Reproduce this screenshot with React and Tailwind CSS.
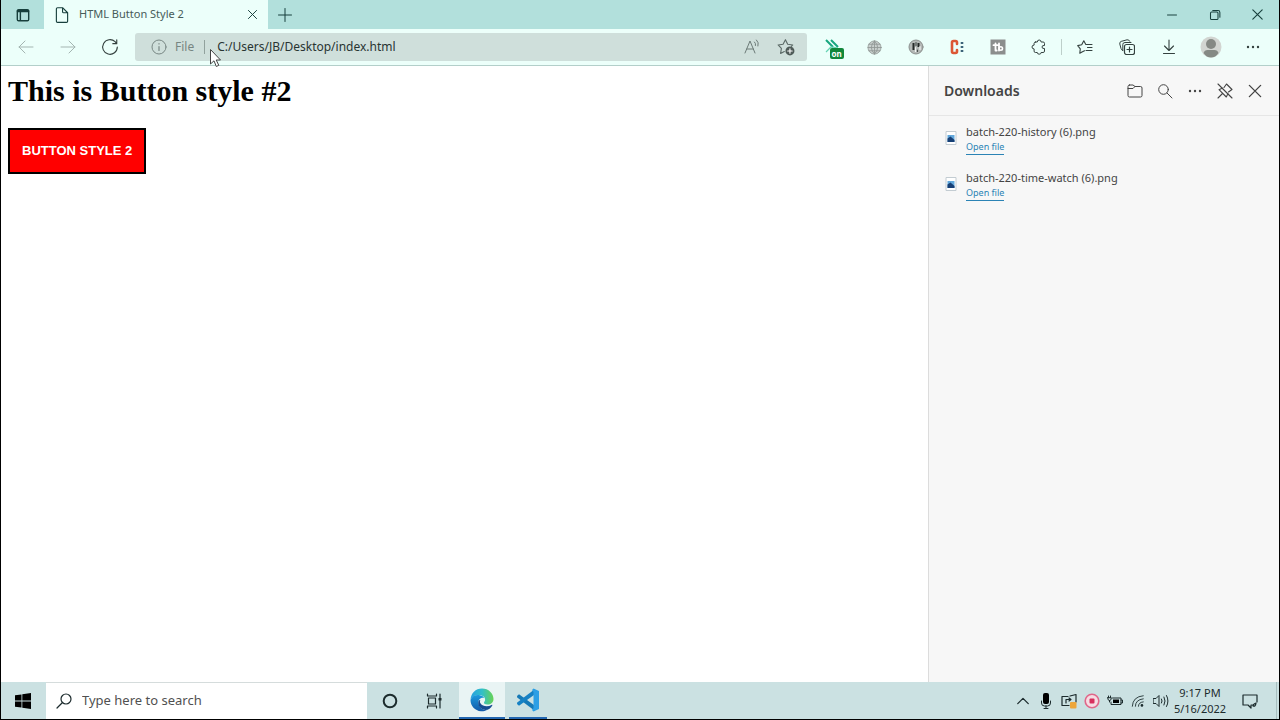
import React, { useState } from 'react';

const downloads = [
    { id: 1, name: 'batch-220-history (6).png' },
    { id: 2, name: 'batch-220-time-watch (6).png' },
];

const Icon = ({ size = 'size-4', children, viewBox = '0 0 16 16' }) => (
    <svg viewBox={viewBox} className={`${size} shrink-0`} fill="none" stroke="currentColor" strokeWidth="1" strokeLinecap="round" strokeLinejoin="round" aria-hidden="true">
        {children}
    </svg>
);

const CloseIcon = ({ size }) => (
    <Icon size={size}><path d="M3 3l10 10M13 3L3 13" strokeWidth="1.200" /></Icon>
);

const DotsIcon = () => (
    <Icon><g fill="currentColor" stroke="none"><circle cx="3" cy="8" r="1.2" /><circle cx="8" cy="8" r="1.2" /><circle cx="13" cy="8" r="1.2" /></g></Icon>
);

// Small document picture used for each downloaded image
const FileThumb = () => (
    <svg viewBox="0 0 12 14" className="mt-[7px] h-[14px] w-3 shrink-0" aria-hidden="true">
        <path d="M1 .5h10v13H1z" fill="#fff" stroke="#c3ccd2" />
        <rect x="2.500" y="4" width="7" height="7" fill="#62a8dc" />
        <path d="M2.500 11V7.500l3-2 4 3.500v2z" fill="#163f75" />
    </svg>
);

const TabStrip = () => (
    <header className="flex h-[29px] bg-[#b2e0dc] text-[#173f3c]">
        <button aria-label="Tab actions" className="flex w-[43px] items-center justify-center">
            <Icon size="size-[14px]">
                <rect x="1.500" y="2" width="13" height="12.500" rx="1.500" strokeWidth="1.600" />
                <path d="M2 3.500h12" strokeWidth="2.500" />
                <path d="M5 5v9" strokeWidth="1.600" />
            </Icon>
        </button>
        <div className="flex w-[224px] items-center bg-[#ecfffa] pr-2 pl-[9px]">
            <Icon size="size-[18px]">
                <path d="M4 1.500h4.500L13 6v7.500q0 1-1 1H4q-1 0-1-1v-11q0-1 1-1zM8.500 1.500V5q0 1 1 1H13" />
            </Icon>
            <span className="ml-2 flex-1 text-[11px] text-[#465c59]">HTML Button Style 2</span>
            <button aria-label="Close tab" className="p-px"><CloseIcon size="size-[13px]" /></button>
        </div>
        <button aria-label="New tab" className="flex w-[34px] items-center justify-center">
            <Icon><path d="M8 1.500v13M1.500 8h13" /></Icon>
        </button>
        <div className="flex-1" />
        <button aria-label="Minimize" className="flex w-[43px] items-center justify-center">
            <Icon size="size-3"><path d="M2 8h12" strokeWidth="1.300" /></Icon>
        </button>
        <button aria-label="Restore" className="flex w-[43px] items-center justify-center">
            <Icon size="size-3">
                <rect x="2" y="4" width="10" height="10" rx="1.500" strokeWidth="1.400" />
                <path d="M5 2h7q2.500 0 2.500 2.500V11" strokeWidth="1.400" />
            </Icon>
        </button>
        <button aria-label="Close window" className="flex w-[43px] items-center justify-center"><CloseIcon size="size-[15px]" /></button>
    </header>
);

const NavButton = ({ label, children, disabled }) => (
    <button aria-label={label} disabled={disabled} className="flex w-[42px] items-center justify-center disabled:text-[#a4b5b1]">{children}</button>
);

const ExtButton = ({ label, children }) => (
    <button aria-label={label} className="flex w-[41px] items-center justify-center">{children}</button>
);

const Toolbar = () => {
    const [url, setUrl] = useState('C:/Users/JB/Desktop/index.html');

    return (
        <nav className="flex h-[37px] border-b border-[#b3cfca] bg-[#ecfffa] pr-[5px] pl-1 text-[#34413f]">
            <NavButton label="Back" disabled><Icon><path d="M15 8H1M7 2L1 8l6 6" /></Icon></NavButton>
            <NavButton label="Forward" disabled><Icon><path d="M1 8h14M9 2l6 6-6 6" /></Icon></NavButton>
            <NavButton label="Refresh">
                <Icon size="size-[18px]"><path d="M14.500 8A6.500 6.500 0 1 1 12.500 3.300L14 5M14 1.500V5h-3.500" /></Icon>
            </NavButton>

            <div className="relative my-1 mr-[6px] ml-1 flex min-w-0 flex-1 items-center rounded-[3px] bg-[#cfdfdb] pr-3 pl-4">
                <Icon size="size-4">
                    <circle cx="8" cy="8" r="7" stroke="#788784" />
                    <path d="M8 7.500v4M8 4.500v.5" stroke="#788784" strokeWidth="1.200" />
                </Icon>
                <label htmlFor="address" className="ml-2 text-xs text-[#778582]">File</label>
                <span className="ml-[10px] h-[14px] w-px bg-[#91a19d]" />
                <input id="address" value={url} onChange={(e) => setUrl(e.target.value)} className="ml-3 min-w-0 flex-1 bg-transparent text-xs text-[#283432] outline-none" />
                <button aria-label="Read aloud" className="text-[#6c7a77]">
                    <Icon size="size-4">
                        <path d="M1 14L6 2l5 12M2.800 10h6.500M10.500 3q1.500 1.300 1 3.500M12.500 1q2.700 2.500 1.500 6" />
                    </Icon>
                </button>
                <button aria-label="Add to favorites" className="ml-[17px] text-[#5c6a67]">
                    <Icon size="size-[18px]">
                        <path d="M6.500 12l-3.300 1.800.7-4.500L1 6.200l4.400-.7L7.500 1.500l2 4 4.500.7-1.200 1.300" />
                        <circle cx="11.500" cy="11.500" r="4" fill="#4f5b58" stroke="none" />
                        <path d="M11.500 9.500v4M9.500 11.500h4" stroke="#fff" />
                    </Icon>
                </button>
                <svg viewBox="0 0 11 18" className="pointer-events-none absolute top-4 left-[75px] h-[18px] w-[11px]" aria-hidden="true">
                    <path d="M.5.5v14.500l3.500-3.200L6.300 17.500l2.500-1.200L6.200 11h4.300z" fill="#fff" stroke="#444" />
                </svg>
            </div>

            <ExtButton label="Code sharing extension">
                <span className="relative flex size-[18px]">
                    <svg viewBox="0 0 18 18" className="size-[18px]" fill="none" stroke="#18a77f" strokeWidth="2" aria-hidden="true">
                        <path d="M1 2l7 7M6 2l7 7" />
                        <path d="M1 14l5-5 7 1" stroke="#65d3b4" strokeWidth="1.200" />
                    </svg>
                    <span className="absolute top-[10px] left-[5px] rounded-[2px] bg-[#11873a] px-[2px] text-[8px] leading-[11px] font-bold text-white">on</span>
                </span>
            </ExtButton>
            <ExtButton label="Web extension">
                <Icon size="size-[15px]">
                    <circle cx="8" cy="8" r="7" fill="#c9d0ce" stroke="#9ea6a3" />
                    <path d="M1 8h14M8 1v14M2 4.500h12M2 11.500h12M8 1q-7 7 0 14M8 1q7 7 0 14" stroke="#8f9794" strokeWidth=".9" />
                </Icon>
            </ExtButton>
            <ExtButton label="Page inspector">
                <Icon>
                    <circle cx="8" cy="8" r="7" fill="#b4b8b6" stroke="#8b908e" />
                    <path d="M5.500 4v7M10.500 4v4" stroke="#242827" strokeWidth="2" strokeLinecap="butt" />
                    <path d="M7.500 8.500v4M12 7.500v3" stroke="#f3f5f4" strokeWidth="1.200" />
                    <path d="M8 3.500v3M9.500 11v1.500" stroke="#4a504e" strokeWidth="1.200" />
                </Icon>
            </ExtButton>
            <ExtButton label="Color picker">
                <Icon>
                    <path d="M8 5V3.500Q8 2 6.500 2H4.500Q3 2 3 3.500v9Q3 14 4.500 14h2Q8 14 8 12.500V11" stroke="#dc5735" strokeWidth="2.600" />
                    <path d="M13 3v2M13 7v2M13 11v2" stroke="#3c6379" strokeWidth="2.600" strokeLinecap="butt" />
                </Icon>
            </ExtButton>
            <ExtButton label="Video toolkit">
                <Icon>
                    <rect x=".5" y=".5" width="15" height="15" fill="#8b8e8d" stroke="none" />
                    <path d="M3.500 6.200h4M5.500 4.500v7h1.200M9 4.500v7" stroke="#fff" strokeWidth="1.800" />
                    <circle cx="10.800" cy="9.500" r="1.700" stroke="#fff" strokeWidth="1.600" />
                </Icon>
            </ExtButton>
            <ExtButton label="Extensions">
                <Icon>
                    <path d="M4.500 3h1.800Q6.300 1 8.200 1t1.900 2h2q1.400 0 1.400 1.400v2.100q-2.500-.4-2.500 1.500t2.500 1.500v2.600q0 1.400-1.400 1.400h-2q0 1.700-1.900 1.700t-1.900-1.700H4.500q-1.400 0-1.400-1.400V9.900Q1 9.900 1 8t2.100-1.900V4.400Q3.100 3 4.500 3z" />
                </Icon>
            </ExtButton>
            <span className="mx-[2px] h-4 w-px self-center bg-[#bdcfca]" />
            <NavButton label="Favorites">
                <Icon>
                    <path d="M7.500 11.800L5 13l-2.200 1.200.5-4.400L.7 6.600l4-.8L6.800 1.800l2 3.700h6.200M10.500 8.500H15M9 11.500h6" strokeWidth="1.100" />
                </Icon>
            </NavButton>
            <NavButton label="Collections">
                <Icon>
                    <rect x="5.500" y="5.500" width="10" height="10" rx="2" strokeWidth="1.200" />
                    <path d="M10.500 8v5M8 10.500h5" strokeWidth="1.200" />
                    <path d="M3.800 11.500Q2.400 11 2 9.500L.8 5Q.4 3 2.200 2.400L8 .8q2-.4 2.700 1.400M3.800 11.500v-6Q3.800 3.500 6 3.500h6" />
                </Icon>
            </NavButton>
            <NavButton label="Downloads"><Icon><path d="M8 1v10M3.500 7L8 11.500 12.500 7M2.500 14.500h11" strokeWidth="1.100" /></Icon></NavButton>
            <NavButton label="Profile">
                <svg viewBox="0 0 22 22" className="size-[22px]" aria-hidden="true">
                    <circle cx="11" cy="11" r="10.500" fill="#d2d5d1" />
                    <circle cx="11" cy="8" r="5" fill="#858984" />
                    <path d="M3.500 17q1-3 4-3h7q3 0 4 3-3 4.500-7.500 4.500T3.500 17z" fill="#858984" />
                </svg>
            </NavButton>
            <NavButton label="Settings and more"><DotsIcon /></NavButton>
        </nav>
    );
};

const PanelButton = ({ label, children }) => (
    <button aria-label={label} className="flex h-6 w-[30px] items-center justify-center">{children}</button>
);

const DownloadsPanel = () => (
    <aside className="w-[351px] shrink-0 border-l border-[#dcdcdc] bg-[#f7f7f7] text-[#444]">
        <div className="flex h-[50px] items-center border-b border-[#e6e6e6] pr-[9px] pl-[15px]">
            <h2 className="flex-1 text-sm font-semibold">Downloads</h2>
            <PanelButton label="Open downloads folder">
                <Icon><path d="M2.500 2H6l2 1.500h5.500q1.500 0 1.500 1.500v7.500q0 1.500-1.500 1.500h-11Q1 14 1 12.500v-9Q1 2 2.500 2zM1 5.500h5L8 3.500" /></Icon>
            </PanelButton>
            <PanelButton label="Search downloads"><Icon><circle cx="6.500" cy="6.500" r="4.800" /><path d="M10 10l5 5" /></Icon></PanelButton>
            <PanelButton label="More options"><DotsIcon /></PanelButton>
            <PanelButton label="Unpin">
                <Icon><path d="M1 1l14 14M1 15l4.500-4.500M5.500 5L2 6.700 9.300 14l1.700-3.500M7 4.500l2.500-3.500L15 6.500 11.500 9" strokeWidth="1.100" /></Icon>
            </PanelButton>
            <PanelButton label="Close downloads"><CloseIcon size="size-[18px]" /></PanelButton>
        </div>
        <ul className="flex flex-col gap-3 px-4 pt-2">
            {downloads.map((file) => (
                <li key={file.id} className="flex h-[34px] gap-[9px]">
                    <FileThumb />
                    <div>
                        <div className="text-[11px] leading-4">{file.name}</div>
                        <a href="#open" className="block w-fit border-b border-[#2b83b5] text-[9px] leading-[14px] text-[#2b83b5]">Open file</a>
                    </div>
                </li>
            ))}
        </ul>
    </aside>
);

const TrayButton = ({ label, children }) => (
    <button aria-label={label} className="flex w-[23px] items-center justify-center">{children}</button>
);

const Taskbar = () => {
    const [query, setQuery] = useState('');

    return (
        <footer className="flex h-[37px] bg-[#cbe1e2] text-[#1c2b2d]">
            <button aria-label="Start" className="flex w-[45px] items-center justify-center pr-px">
                <svg viewBox="0 0 16 16" className="size-4" fill="#000" aria-hidden="true">
                    <path d="M0 2.300l6.500-.9v6.200H0zM7.300 1.300L16 0v7.600H7.300zM0 8.400h6.500v6.200L0 13.700zM7.300 8.400H16V16l-8.700-1.300z" />
                </svg>
            </button>
            <label className="flex w-[321px] items-center border-t border-[#d5dcdc] bg-white pl-[10px]">
                <Icon><circle cx="10" cy="6" r="5" strokeWidth="1.200" /><path d="M6.500 9.500L1 15" strokeWidth="1.200" /></Icon>
                <input aria-label="Search" placeholder="Type here to search" value={query} onChange={(e) => setQuery(e.target.value)} className="ml-[10px] min-w-0 flex-1 text-[13px] outline-none placeholder:text-[#505050]" />
            </label>
            <button aria-label="Cortana" className="flex w-[46px] items-center justify-center">
                <Icon><circle cx="8" cy="8" r="6.300" strokeWidth="2" /></Icon>
            </button>
            <button aria-label="Task view" className="flex w-[46px] items-center justify-center pr-1">
                <Icon><path d="M1.500 1v2h9V1M1.500 15v-2h9v2M2.500 5h7v6h-7zM14 1v14" strokeWidth="1.200" /><path d="M14 5v2.500" strokeWidth="3" strokeLinecap="butt" /></Icon>
            </button>
            <button aria-label="Microsoft Edge" className="flex w-[46px] items-center justify-center border-b-2 border-[#2266b0] bg-[#e9f4f4]">
                <svg viewBox="0 0 24 24" className="size-6" aria-hidden="true">
                    <defs>
                        <linearGradient id="edgeTop" x1="0" y1=".5" x2="1" y2=".5"><stop offset="0" stopColor="#259fe0" /><stop offset=".5" stopColor="#32bfc9" /><stop offset="1" stopColor="#68d353" /></linearGradient>
                        <linearGradient id="edgeLeft" x1="0" y1="0" x2="0" y2="1"><stop offset="0" stopColor="#1b9ade" /><stop offset="1" stopColor="#1459a8" /></linearGradient>
                    </defs>
                    <path d="M.5 12C1 5 5.500.5 12 .5S23.500 5.500 23.500 11c0 3.500-2.600 5.500-6 5.500-3 0-4-1.200-3.400-2.300.6-.9 1-1.500 1-2.700C15 8.500 12 7 8.500 7S1.500 9 .5 12z" fill="url(#edgeTop)" />
                    <path d="M.5 12C1.500 8.500 5 6.500 9 7c2.500.3 4.500 1.500 5.400 3-4-.8-6.600 2-5.900 5.500C9.300 19.500 13 22.500 17 22c-2 1.200-4 1.500-6 1.300C5 22.700.5 18 .5 12z" fill="url(#edgeLeft)" />
                    <path d="M8.500 13c-1.500 5.500 3.500 9 7 9 3 0 5.500-2 6.800-4.500.3-.7-.2-.8-.7-.5-3.600 1.900-9 1.600-11-1.500-.7-1-.9-2.200-.3-3.500-.8.100-1.400.4-1.800 1z" fill="#164c91" />
                </svg>
            </button>
            <button aria-label="Visual Studio Code" className="mx-1 flex w-[38px] items-center justify-center border-b-2 border-[#2266b0]">
                <svg viewBox="0 0 24 24" className="size-6" aria-hidden="true">
                    <path d="M1 8l2-1.700 16 11.500v5.200L1.200 9.500z" fill="#1679b6" />
                    <path d="M1 16l2 1.700L19 6.200V1L1.200 14.500z" fill="#1681c4" />
                    <path d="M17.500.5L23 3v18l-5.500 2.500L16 22l1.500-2V4L16 2z" fill="#2c9fe5" />
                </svg>
            </button>
            <div className="flex-1" />
            <TrayButton label="Show hidden icons"><Icon size="size-[14px]"><path d="M2 11l6-6 6 6" strokeWidth="1.500" /></Icon></TrayButton>
            <TrayButton label="Microphone">
                <Icon><rect x="5" y="0" width="6" height="11" rx="2" fill="#000" stroke="none" /><path d="M3.500 8v2q0 3 3 3h3q3 0 3-3V8M8 13v2.500M6 15.500h4" /></Icon>
            </TrayButton>
            <TrayButton label="Display settings">
                <Icon>
                    <path d="M7 3.500H1v9h7M9 3l6-1.500V9M5 10V6.500h4.500M8 5l2 1.500L8 8" strokeWidth="1.200" />
                    <rect x="9" y="9" width="6.500" height="6.500" rx="1" fill="#eda63a" stroke="none" />
                </Icon>
            </TrayButton>
            <TrayButton label="Screen recorder">
                <Icon><circle cx="8" cy="8" r="6.800" fill="#f6dce3" stroke="#e0678a" strokeWidth="1.600" /><rect x="5.500" y="5.500" width="5" height="5" rx="1" fill="#d72f5d" stroke="none" /></Icon>
            </TrayButton>
            <TrayButton label="Battery">
                <Icon><path d="M5.500 5H14v6.500H4V9M14 7h1.500v3H14M1.500 3v1.500M3.500 3v1.500M.7 4.700h3.600q.2 2.800-1.800 2.800T.7 4.700M2.500 7.500V9" /><rect x="6" y="6.500" width="6" height="3.500" fill="#000" stroke="none" /></Icon>
            </TrayButton>
            <TrayButton label="Network">
                <Icon size="size-[14px]"><path d="M1.500 14Q2 3 14 2M5 14Q5 6.500 14 5.500M8.500 14Q8.500 9.500 14 9" /><circle cx="12.500" cy="13" r="1.500" fill="currentColor" stroke="none" /></Icon>
            </TrayButton>
            <TrayButton label="Volume">
                <Icon><path d="M.5 5.500h2.500l3-3v11l-3-3H.5zM8.500 6q1.200 2 0 4M11 4q2.200 4 0 8M13.500 2.500q3 5.500 0 11" /></Icon>
            </TrayButton>
            <time className="flex w-[56px] flex-col items-center justify-center text-[11px] leading-4" dateTime="2022-05-16T21:17">
                <span>9:17 PM</span>
                <span>5/16/2022</span>
            </time>
            <button aria-label="Notifications" className="flex w-[44px] items-center justify-center">
                <Icon><path d="M1 2h14v7M1 2v10h5l3 3v-3h2M11 13q0-2 3-3-.5 4-3 3z" strokeWidth="1.200" /></Icon>
            </button>
            <button aria-label="Show desktop" className="ml-1 w-[3px] border-l border-[#a9bfc0]" />
        </footer>
    );
};

const App = () => (
    <div className="flex min-h-screen flex-col border-r border-b border-l border-black bg-white font-['Noto_Sans','Open_Sans',sans-serif]">
        <TabStrip />
        <Toolbar />
        <div className="flex flex-1">
            <main className="min-w-0 flex-1 px-[7px] pt-2">
                <h1 className="font-['Liberation_Serif',serif] text-[30px] leading-[34px] font-bold text-black">This is Button style #2</h1>
                <button className="mt-5 h-[46px] border-2 border-black bg-[#ff0000] px-3 font-['Liberation_Sans',sans-serif] text-[13px] font-bold text-white">BUTTON STYLE 2</button>
            </main>
            <DownloadsPanel />
        </div>
        <Taskbar />
    </div>
);

export default App;
